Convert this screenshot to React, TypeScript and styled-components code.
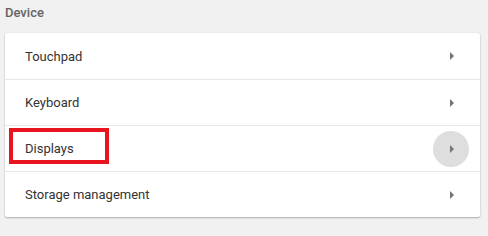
import React from "react";
import styled, { createGlobalStyle } from "styled-components";

const Global = createGlobalStyle`
  html, body { margin: 0; padding: 0; background: #f1f1f1; }
  body { font-family: Roboto, "Noto Sans", Arial, sans-serif; -webkit-font-smoothing: antialiased; }
`;

const Page = styled.div`
  width: 488px;
  height: 236px;
  box-sizing: border-box;
  padding: 0 8px 0 5px;
  background: #f1f1f1;
`;

const Header = styled.div`
  height: 25px;
  line-height: 25px;
  font-size: 13px;
  font-weight: 500;
  color: #646464;
  padding-top: 0;
  margin-bottom: 8px;
`;

const Card = styled.div`
  width: 475px;
  background: #fff;
  border-radius: 2px;
  box-shadow: 0 1px 2px rgba(0, 0, 0, 0.28), 0 0 1px rgba(0, 0, 0, 0.12);
  display: flex;
  flex-direction: column;
`;

const Row = styled.div<{ $first?: boolean }>`
  position: relative;
  height: 46px;
  box-sizing: border-box;
  display: flex;
  align-items: center;
  justify-content: space-between;
  padding-left: 20px;
  border-top: ${(p) => (p.$first ? "none" : "1px solid #e8e8e8")};
`;

const Label = styled.span`
  font-size: 13px;
  color: #333;
`;

const IconButton = styled.div<{ $hover?: boolean }>`
  width: 36px;
  height: 36px;
  margin-right: 11px;
  border-radius: 50%;
  background: ${(p) => (p.$hover ? "#dedede" : "transparent")};
  display: flex;
  align-items: center;
  justify-content: center;
`;

const Highlight = styled.div`
  position: absolute;
  left: 4px;
  top: 2px;
  width: 100px;
  height: 36px;
  box-sizing: border-box;
  border: 4px solid #e8141f;
`;

const Arrow = () => (
  <svg width="8" height="10" viewBox="0 0 8 10" style={{ marginLeft: 2 }}>
    <path d="M2 1 L6 5 L2 9 Z" fill="#757575" />
  </svg>
);

const items = ["Touchpad", "Keyboard", "Displays", "Storage management"];

export default function App() {
  return (
    <Page>
      <Global />
      <Header>Device</Header>
      <Card>
        {items.map((name, i) => (
          <Row key={name} $first={i === 0}>
            <Label>{name}</Label>
            <IconButton $hover={name === "Displays"}>
              <Arrow />
            </IconButton>
            {name === "Displays" && <Highlight />}
          </Row>
        ))}
      </Card>
    </Page>
  );
}
